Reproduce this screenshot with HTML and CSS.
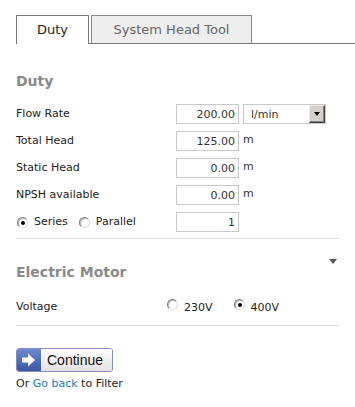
FILE: index.html
```html
<!DOCTYPE html>
<html>
<head>
<meta charset="utf-8">
<link rel="stylesheet" href="styles.css">
</head>
<body>
<div class="page">
  <div class="tabs">
    <div class="tab active">Duty</div>
    <div class="tab">System Head Tool</div>
  </div>
  <div class="content">
    <h2 class="title">Duty</h2>
    <div class="form">
      <div class="label">Flow Rate</div>
      <div class="field"><span class="input">200.00</span><span class="select"><span class="select-text">l/min</span><span class="drop"><span class="drop-tri"></span></span></span></div>
      <div class="label">Total Head</div>
      <div class="field"><span class="input">125.00</span><span class="unit">m</span></div>
      <div class="label">Static Head</div>
      <div class="field"><span class="input">0.00</span><span class="unit">m</span></div>
      <div class="label">NPSH available</div>
      <div class="field"><span class="input">0.00</span><span class="unit">m</span></div>
      <div class="label radios"><span class="radio checked"></span><span class="rlabel">Series</span><span class="radio"></span><span class="rlabel">Parallel</span></div>
      <div class="field"><span class="input">1</span></div>
    </div>
    <div class="sep first"></div>
    <div class="section-head">
      <h2 class="title">Electric Motor</h2>
      <span class="caret"></span>
    </div>
    <div class="voltage">
      <div class="label">Voltage</div>
      <div class="vopts"><span class="radio"></span><span class="vlabel">230V</span><span class="radio checked"></span><span class="vlabel">400V</span></div>
    </div>
    <div class="sep second"></div>
    <div class="button">
      <span class="btn-icon"><svg width="24" height="22" viewBox="0 0 24 22"><path d="M5 8.5h6V4.5l7 6.5-7 6.5v-4H5z" fill="#fff"/></svg></span>
      <span class="btn-text">Continue</span>
    </div>
    <p class="back">Or <a class="link">Go back</a> to Filter</p>
  </div>
</div>
</body>
</html>
```
FILE: styles.css
```css
html, body {
  margin: 0;
  padding: 0;
  background: #fff;
}
body {
  font-family: "DejaVu Sans", Verdana, sans-serif;
  font-size: 11px;
  color: #222;
}
.page {
  padding-top: 15px;
}
.tabs {
  display: flex;
  gap: 2px;
  margin-left: 16px;
  border-bottom: 1px solid #777;
  height: 28px;
}
.tab {
  height: 28px;
  box-sizing: border-box;
  border: 1px solid #888;
  border-bottom: none;
  font-size: 13px;
  line-height: 27px;
  text-align: center;
  color: #666;
  background: #eee;
  width: 161px;
}
.tab.active {
  width: 73px;
  height: 29px;
  background: #fff;
  color: #222;
  border-color: #777;
}
.content {
  margin-left: 16px;
  width: 323px;
}
.title {
  margin: 0;
  font-size: 14px;
  line-height: 17px;
  font-weight: bold;
  color: #8a8a8a;
}
.content > .title {
  margin-top: 29px;
}
.form {
  margin-top: 14px;
  display: grid;
  grid-template-columns: 160px auto;
  row-gap: 7px;
}
.label {
  height: 20px;
  line-height: 18px;
  display: flex;
  align-items: center;
}
.field {
  display: flex;
  align-items: center;
  height: 20px;
}
.input {
  box-sizing: border-box;
  width: 63px;
  height: 20px;
  border: 1px solid #c8c8c8;
  text-align: right;
  padding-right: 3px;
  line-height: 20px;
  color: #333;
}
.unit {
  margin-left: 4px;
  margin-top: -4px;
  color: #333;
}
.select {
  margin-left: 4px;
  box-sizing: border-box;
  width: 83px;
  height: 20px;
  border: 1px solid #c8c8c8;
  display: flex;
  align-items: center;
  justify-content: space-between;
}
.select-text {
  padding-left: 7px;
  color: #333;
}
.drop {
  box-sizing: border-box;
  width: 16px;
  height: 18px;
  background: #d4d0c8;
  border-top: 1px solid #eeebe6;
  border-left: 1px solid #eeebe6;
  border-right: 1px solid #404040;
  border-bottom: 1px solid #404040;
  box-shadow: inset -1px -1px #808080;
  display: flex;
  align-items: center;
  justify-content: center;
}
.drop-tri {
  width: 0;
  height: 0;
  border-left: 3.5px solid transparent;
  border-right: 3.5px solid transparent;
  border-top: 4px solid #000;
}
.radio {
  box-sizing: border-box;
  width: 11px;
  height: 11px;
  border-radius: 50%;
  border: 1px solid;
  border-color: #7a7a7a #d8d8d8 #e4e4e4 #7a7a7a;
  box-shadow: inset 1px 1px 0 #bbb;
  background: #fff;
  position: relative;
  flex: none;
}
.radio.checked::after {
  content: "";
  position: absolute;
  left: 3px;
  top: 3px;
  width: 4px;
  height: 4px;
  border-radius: 50%;
  background: #000;
}
.radios .radio {
  margin-left: 1px;
}
.rlabel {
  margin-left: 6px;
  margin-right: 10px;
}
.sep {
  height: 1px;
  background: #dcdcdc;
}
.sep.first {
  margin-top: 6px;
}
.section-head {
  margin-top: 25px;
  display: flex;
  justify-content: space-between;
}
.caret {
  width: 0;
  height: 0;
  border-left: 4px solid transparent;
  border-right: 4px solid transparent;
  border-top: 5px solid #555;
  margin-top: -5px;
  margin-right: 2px;
}
.voltage {
  margin-top: 16px;
  display: flex;
  align-items: center;
  height: 20px;
}
.voltage .label {
  width: 151px;
}
.vopts {
  display: flex;
  align-items: center;
}
.vopts .radio {
  margin-top: -6px;
}
.vlabel {
  margin-left: 6px;
  margin-right: 21px;
}
.sep.second {
  margin-top: 8px;
}
.button {
  margin-top: 22px;
  display: inline-flex;
  box-sizing: border-box;
  width: 97px;
  height: 24px;
  border: 1px solid #8090b8;
  border-radius: 3px;
  overflow: hidden;
}
.btn-icon {
  width: 24px;
  height: 22px;
  background: linear-gradient(#6f88d0, #3a56a6);
  display: flex;
}
.btn-text {
  flex: 1;
  background: linear-gradient(#fff, #e2e2e2);
  font-family: "Liberation Sans", Arial, sans-serif;
  font-size: 14px;
  line-height: 22px;
  padding-left: 6px;
  color: #111;
}
.back {
  margin: 3px 0 0 0;
  line-height: 14px;
}
.link {
  color: #1c77c3;
}
```
